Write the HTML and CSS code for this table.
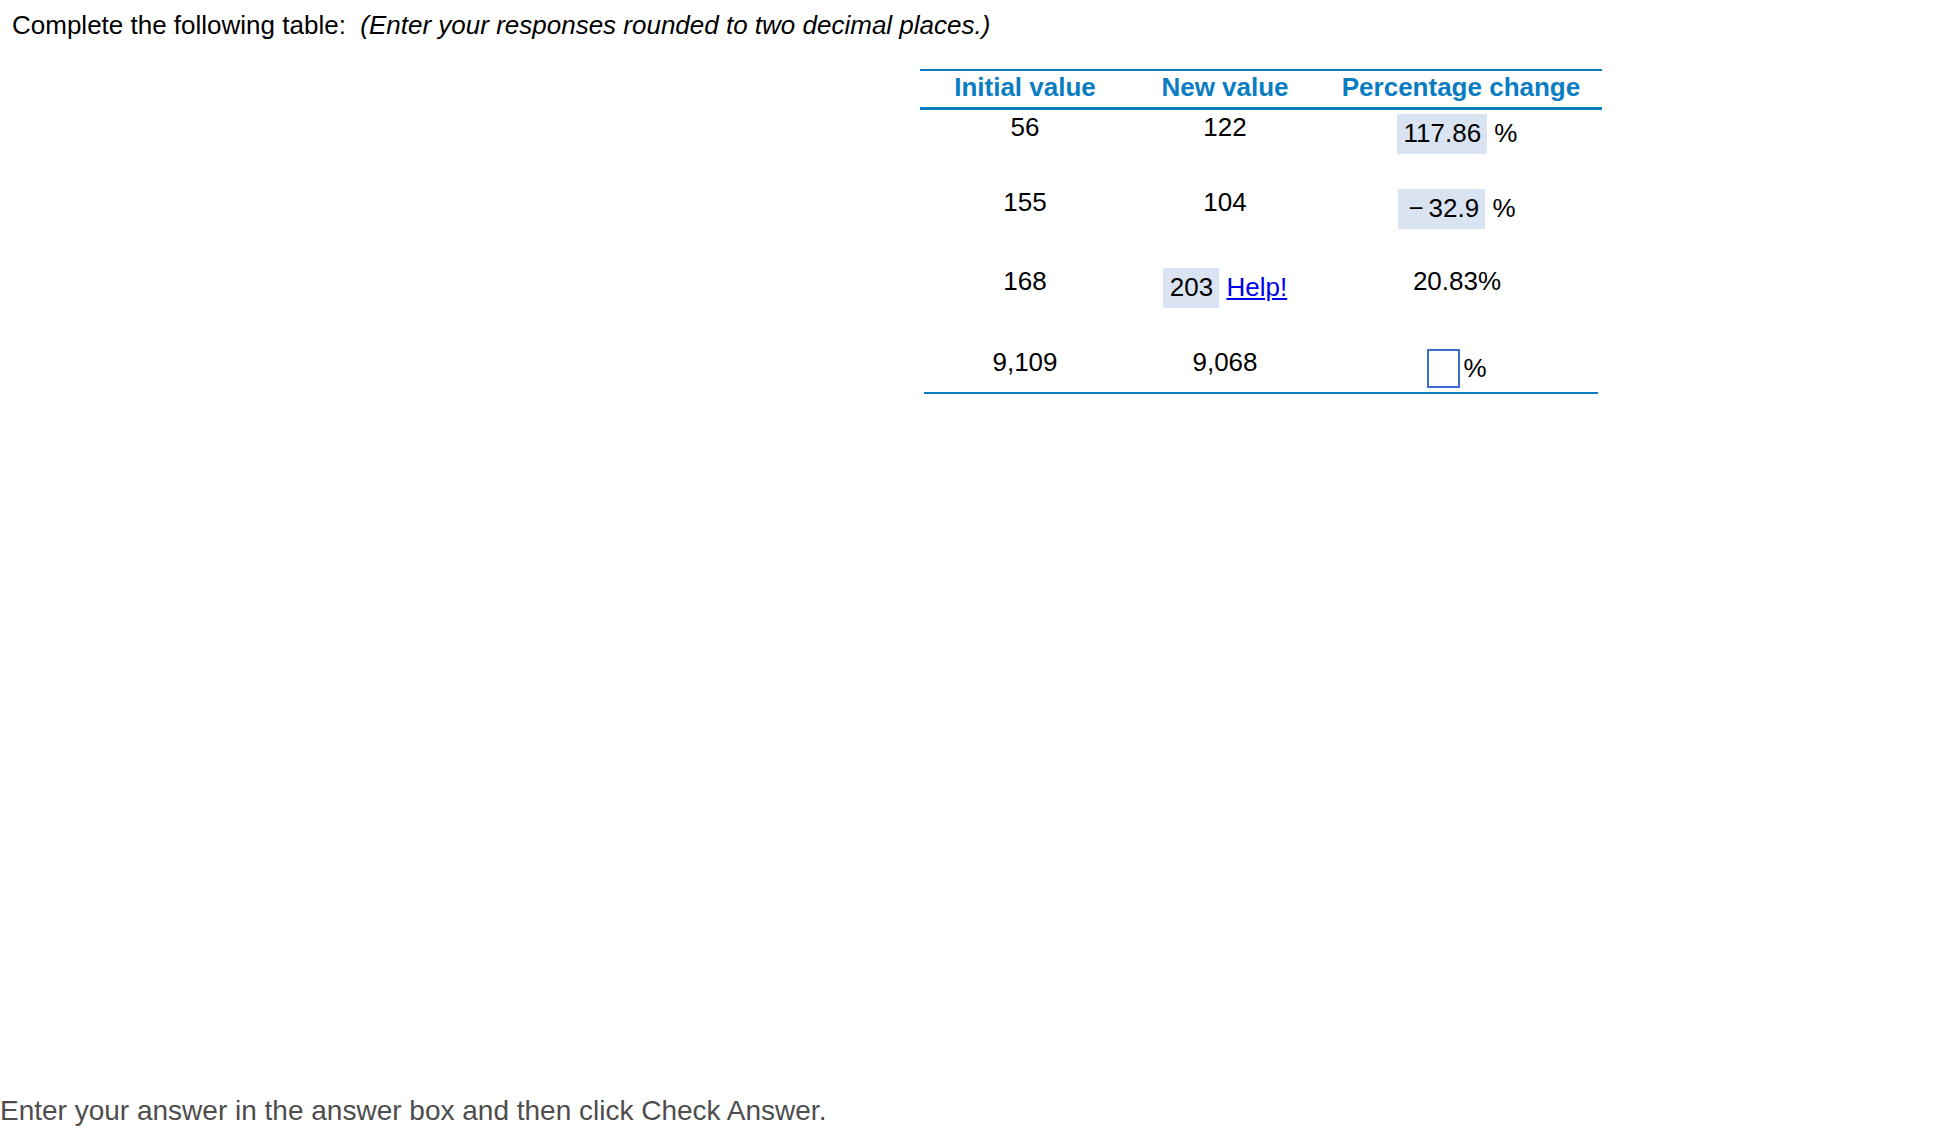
FILE: index.html
```html
<!DOCTYPE html>
<html lang="en">
<head>
<meta charset="utf-8">
<title>Percentage change</title>
<link rel="stylesheet" href="styles.css">
</head>
<body>
<div class="title">Complete the following table:&nbsp; <i>(Enter your responses rounded to two decimal places.)</i></div>
<div class="tablewrap">
  <table class="grid">
    <colgroup><col class="c1"><col class="c2"><col class="c3"></colgroup>
    <thead>
      <tr><th>Initial value</th><th>New value</th><th>Percentage change</th></tr>
    </thead>
    <tbody>
      <tr class="r1"><td>56</td><td>122</td><td class="pc"><span class="ans">117.86</span> %</td></tr>
      <tr class="r2"><td>155</td><td>104</td><td class="pc"><span class="ans neg"><span class="minus">&minus;</span>32.9</span> %</td></tr>
      <tr class="r3"><td>168</td><td><span class="ans">203</span> <a href="#" class="help">Help!</a></td><td class="pc">20.83%</td></tr>
      <tr class="r4"><td>9,109</td><td>9,068</td><td class="pc"><span class="inp"></span><span class="pct">%</span></td></tr>
    </tbody>
  </table>
  <div class="rule"></div>
</div>
<div class="foot">Enter your answer in the answer box and then click Check Answer.</div>
</body>
</html>
```
FILE: styles.css
```css
html, body {
  margin: 0;
  padding: 0;
}
body {
  font-family: "Liberation Sans", Arial, Helvetica, sans-serif;
  font-size: 26px;
  line-height: 30px;
  color: #000;
  background: #fff;
  display: flex;
  flex-direction: column;
  min-height: 100vh;
  box-sizing: border-box;
}
.title {
  padding: 10px 10px 0 12px;
  white-space: nowrap;
}
.tablewrap {
  margin: 29px 0 0 920px;
  width: 682px;
}
.grid {
  border-collapse: separate;
  border-spacing: 0;
  table-layout: fixed;
  width: 682px;
}
.c1 { width: 210px; }
.c2 { width: 190px; }
.c3 { width: 282px; }
.grid th {
  color: #0a7dc2;
  font-weight: bold;
  text-align: center;
  padding: 1px 0 5px 0;
  border-top: 2px solid #0a7dc2;
  border-bottom: 3px solid #0a7dc2;
  white-space: nowrap;
}
.grid td {
  text-align: center;
  vertical-align: top;
  padding: 2px 0 34px 0;
  white-space: nowrap;
}
.grid td.pc {
  padding-right: 8px;
}
.grid .r1 td { padding-bottom: 31px; }
.grid .r2 td { padding-bottom: 35px; }
.grid .r3 td { padding-bottom: 37px; }
.grid .r4 td { padding-bottom: 4px; }
.ans {
  display: inline-block;
  margin-top: 2px;
  padding: 4px 6px 6px 7px;
  background: #d9e3f1;
  line-height: 30px;
}
.ans.neg {
  padding-left: 10px;
}
.minus {
  margin-right: 5px;
}
.help {
  color: #0000ee;
  text-decoration: underline;
}
.inp {
  display: inline-block;
  box-sizing: border-box;
  width: 33px;
  height: 39px;
  margin-top: 2px;
  border: 2px solid #3a6bd0;
  background: #fff;
  vertical-align: -11px;
}
.pct {
  margin-left: 3px;
}
.rule {
  height: 2px;
  margin: 0 4px;
  background: #0a7dc2;
}
.foot {
  margin-top: auto;
  padding: 0 0 7px 0;
  font-size: 28px;
  line-height: 32px;
  color: #4d4d4d;
  white-space: nowrap;
}
```
